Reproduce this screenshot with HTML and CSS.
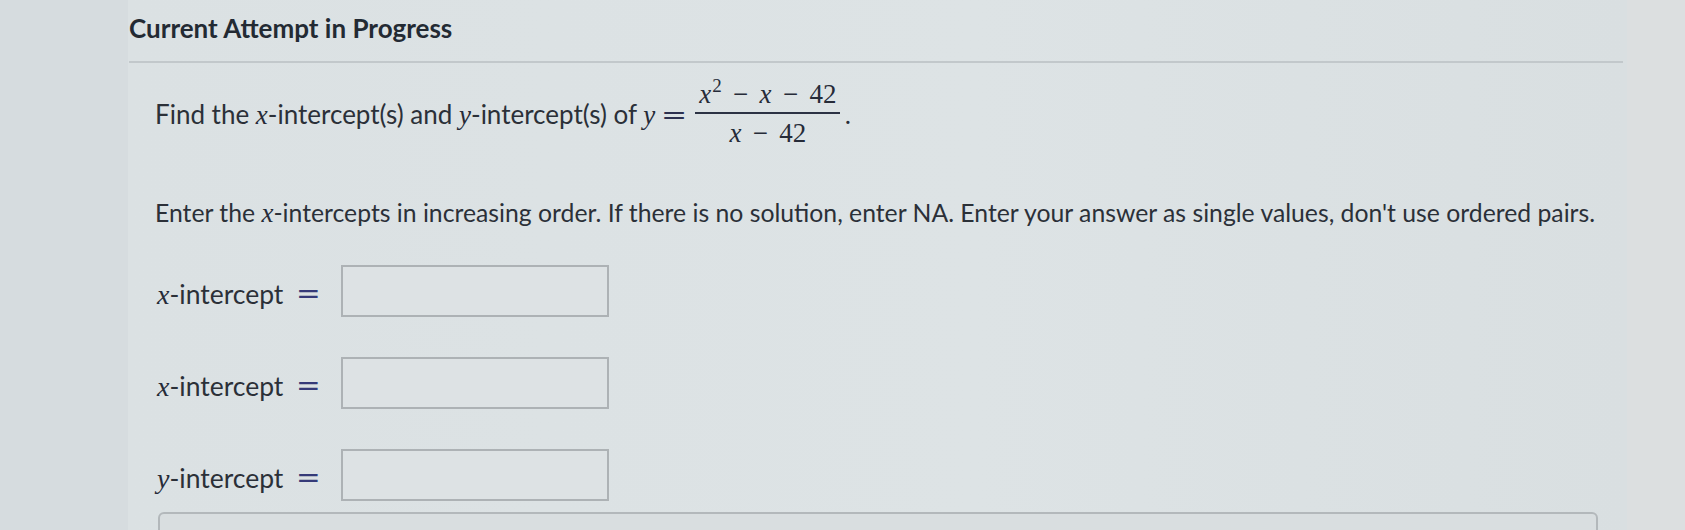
FILE: index.html
```html
<!DOCTYPE html>
<html lang="en">
<head>
<meta charset="utf-8">
<title>Current Attempt in Progress</title>
<link rel="stylesheet" href="styles.css">
</head>
<body>
<div class="screen">
  <div class="content">
    <h1 class="title">Current Attempt in Progress</h1>
    <div class="divider"></div>
    <div class="question">
      <p class="prompt">Find the <i class="mi">x</i>-intercept(s) and <i class="mi">y</i>-intercept(s) of <span class="math"><i class="mi">y</i><span class="rel"><span class="eqglyph">=</span></span><span class="frac"><span class="num"><i class="mi">x</i><sup class="sup">2</sup><span class="mo">−</span><i class="mi">x</i><span class="mo">−</span>42</span><span class="den"><i class="mi">x</i><span class="mo">−</span>42</span></span><span class="dot">.</span></span></p>
      <p class="instr">Enter the <i class="mi">x</i>-intercepts in increasing order. If there is no solution, enter NA. Enter your answer as single values, don't use ordered pairs.</p>
      <div class="answers">
        <div class="row">
          <span class="label"><i class="mi">x</i>-intercept</span>
          <span class="eq"><span class="eqglyph">=</span></span>
          <span class="box"></span>
        </div>
        <div class="row">
          <span class="label"><i class="mi">x</i>-intercept</span>
          <span class="eq"><span class="eqglyph">=</span></span>
          <span class="box"></span>
        </div>
        <div class="row">
          <span class="label"><i class="mi">y</i>-intercept</span>
          <span class="eq"><span class="eqglyph">=</span></span>
          <span class="box"></span>
        </div>
      </div>
    </div>
    <div class="card"></div>
  </div>
</div>
</body>
</html>
```

FILE: styles.css
```css
html, body {
  margin: 0;
  padding: 0;
}

body {
  width: 1685px;
  height: 530px;
  overflow: hidden;
  background: #dcdfe0;
  font-family: Lato, "Noto Sans", sans-serif;
  color: #2b3038;
}

.screen {
  width: 1627px;
  height: 530px;
  background: linear-gradient(90deg, #d6dcdf 0, #d6dcdf 128px, #dbe1e3 128px, #dde3e5 60%, #d9dfe1 100%);
  overflow: hidden;
}

.content {
  padding-left: 129px;
  width: 1494px;
}

.title {
  margin: 0;
  padding-top: 13px;
  font-size: 26px;
  line-height: 30px;
  font-weight: 700;
  color: #232a33;
}

.divider {
  margin-top: 18px;
  height: 2px;
  background: #c2c8cb;
}

.question {
  padding-left: 26px;
}

.prompt {
  margin: 16px 0 0;
  font-size: 26px;
  line-height: 30px;
  white-space: nowrap;
}

.mi {
  font-family: "Liberation Serif", "DejaVu Serif", serif;
  font-style: italic;
  font-size: 27px;
  color: #262b38;
}

.math {
  font-family: "Liberation Serif", "DejaVu Serif", serif;
  font-size: 27px;
  color: #262b38;
}

.mo {
  padding: 0 0.42em;
}

.rel {
  display: inline-block;
  width: 38px;
  padding-left: 6px;
  box-sizing: border-box;
  font-family: "DejaVu Serif", serif;
  font-size: 26px;
  color: #2d3150;
}

.eqglyph {
  display: inline-block;
  transform: scaleX(1.2);
  transform-origin: left center;
}

.frac {
  display: inline-flex;
  flex-direction: column;
  align-items: center;
  vertical-align: middle;
  margin: 0 4px 0 2px;
  line-height: 30px;
}

.num {
  padding: 0 4px 3px;
}

.den {
  align-self: stretch;
  text-align: center;
  border-top: 2px solid #2c3244;
  padding: 4px 0 8px;
}

.sup {
  font-size: 19px;
  line-height: 0;
  vertical-align: 11px;
  margin-left: 1px;
}

.instr {
  margin: 42px 0 0;
  font-size: 24.75px;
  line-height: 30px;
  white-space: nowrap;
}

.answers {
  margin-top: 37px;
  display: flex;
  flex-direction: column;
  gap: 40px;
}

.row {
  display: flex;
  align-items: center;
  height: 52px;
}

.label {
  width: 141px;
  padding-left: 2px;
  font-size: 26.5px;
  padding-top: 6px;
}

.label .mi {
  font-size: 28px;
}

.eq {
  width: 43px;
  font-family: "DejaVu Serif", serif;
  font-size: 28px;
  color: #353a78;
  padding-top: 4px;
}

.eq .eqglyph {
  margin-left: -2px;
  transform: scaleX(1.05);
}

.box {
  width: 264px;
  height: 48px;
  border: 2px solid #adb2b5;
  background: #dde2e4;
}

.card {
  margin-top: 11px;
  margin-left: 29px;
  width: 1436px;
  height: 60px;
  border: 2px solid #b3b8bb;
  border-radius: 6px;
  background: #d9dee0;
}
```
